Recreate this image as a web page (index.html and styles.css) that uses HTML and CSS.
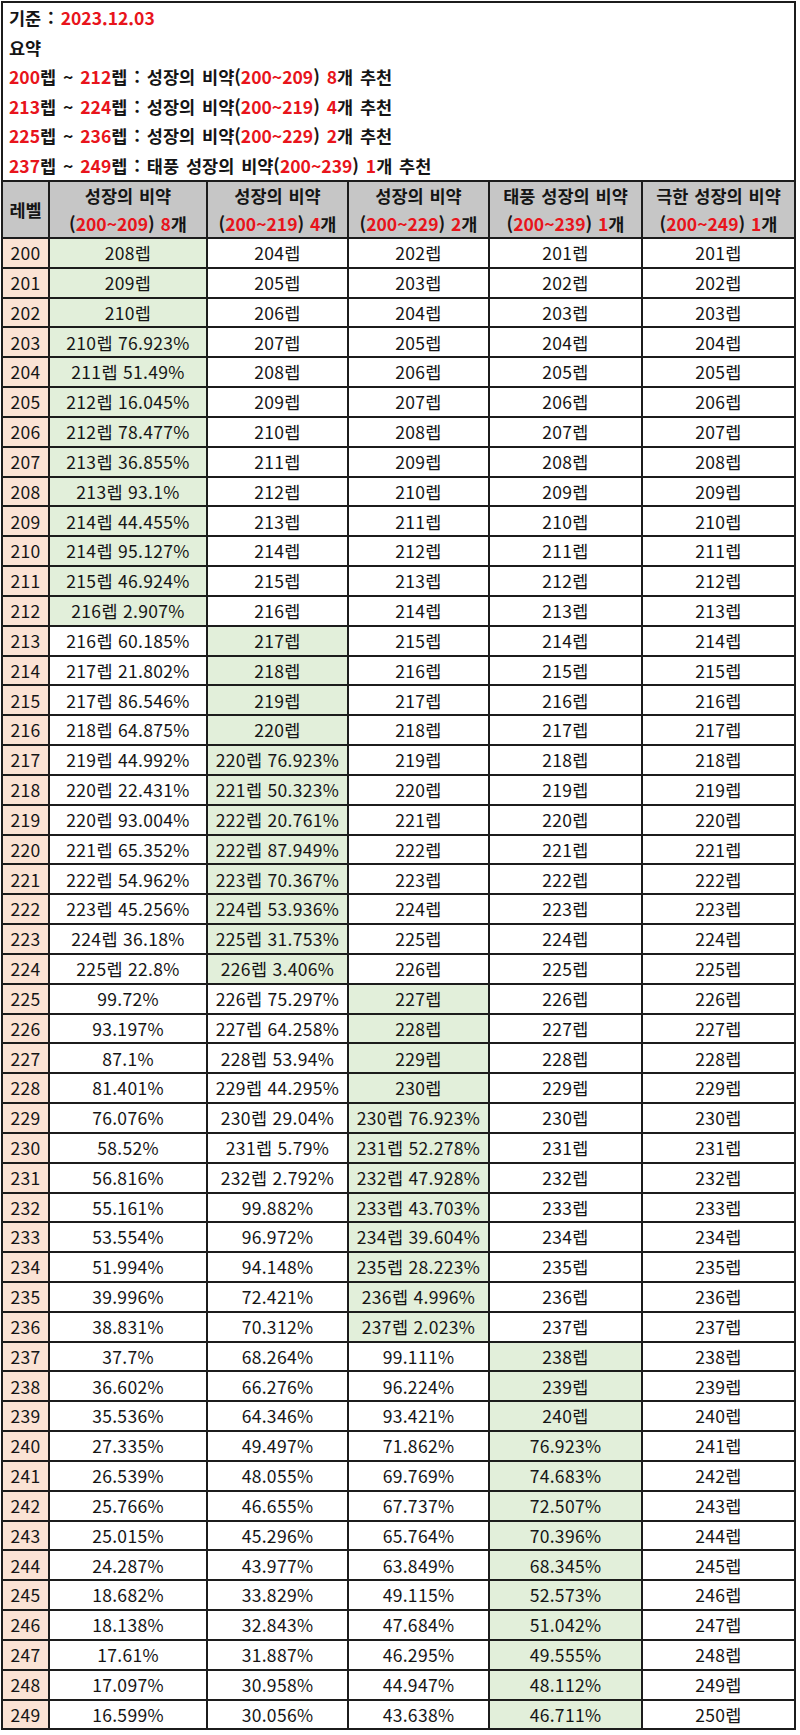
FILE: index.html
```html
<!DOCTYPE html>
<html lang="ko">
<head>
<meta charset="utf-8">
<title>성장의 비약 정리</title>
<link rel="stylesheet" href="styles.css">
</head>
<body>
<div class="sheet">
  <div class="summary">
    <div class="line">기준 : <span class="red">2023.12.03</span></div>
    <div class="line">요약</div>
    <div class="line"><span class="red">200</span>렙 ~ <span class="red">212</span>렙 : 성장의 비약(<span class="red">200~209</span>) <span class="red">8</span>개 추천</div>
    <div class="line"><span class="red">213</span>렙 ~ <span class="red">224</span>렙 : 성장의 비약(<span class="red">200~219</span>) <span class="red">4</span>개 추천</div>
    <div class="line"><span class="red">225</span>렙 ~ <span class="red">236</span>렙 : 성장의 비약(<span class="red">200~229</span>) <span class="red">2</span>개 추천</div>
    <div class="line"><span class="red">237</span>렙 ~ <span class="red">249</span>렙 : 태풍 성장의 비약(<span class="red">200~239</span>) <span class="red">1</span>개 추천</div>
  </div>
  <div class="grid">
    <div class="c h">레벨</div>
    <div class="c h"><span>성장의 비약</span><span>(<b class="red">200~209</b>) <b class="red">8</b>개</span></div>
    <div class="c h"><span>성장의 비약</span><span>(<b class="red">200~219</b>) <b class="red">4</b>개</span></div>
    <div class="c h"><span>성장의 비약</span><span>(<b class="red">200~229</b>) <b class="red">2</b>개</span></div>
    <div class="c h"><span>태풍 성장의 비약</span><span>(<b class="red">200~239</b>) <b class="red">1</b>개</span></div>
    <div class="c h"><span>극한 성장의 비약</span><span>(<b class="red">200~249</b>) <b class="red">1</b>개</span></div>

    <div class="c lv">200</div><div class="c g">208렙</div><div class="c">204렙</div><div class="c">202렙</div><div class="c">201렙</div><div class="c">201렙</div>
    <div class="c lv">201</div><div class="c g">209렙</div><div class="c">205렙</div><div class="c">203렙</div><div class="c">202렙</div><div class="c">202렙</div>
    <div class="c lv">202</div><div class="c g">210렙</div><div class="c">206렙</div><div class="c">204렙</div><div class="c">203렙</div><div class="c">203렙</div>
    <div class="c lv">203</div><div class="c g">210렙 76.923%</div><div class="c">207렙</div><div class="c">205렙</div><div class="c">204렙</div><div class="c">204렙</div>
    <div class="c lv">204</div><div class="c g">211렙 51.49%</div><div class="c">208렙</div><div class="c">206렙</div><div class="c">205렙</div><div class="c">205렙</div>
    <div class="c lv">205</div><div class="c g">212렙 16.045%</div><div class="c">209렙</div><div class="c">207렙</div><div class="c">206렙</div><div class="c">206렙</div>
    <div class="c lv">206</div><div class="c g">212렙 78.477%</div><div class="c">210렙</div><div class="c">208렙</div><div class="c">207렙</div><div class="c">207렙</div>
    <div class="c lv">207</div><div class="c g">213렙 36.855%</div><div class="c">211렙</div><div class="c">209렙</div><div class="c">208렙</div><div class="c">208렙</div>
    <div class="c lv">208</div><div class="c g">213렙 93.1%</div><div class="c">212렙</div><div class="c">210렙</div><div class="c">209렙</div><div class="c">209렙</div>
    <div class="c lv">209</div><div class="c g">214렙 44.455%</div><div class="c">213렙</div><div class="c">211렙</div><div class="c">210렙</div><div class="c">210렙</div>
    <div class="c lv">210</div><div class="c g">214렙 95.127%</div><div class="c">214렙</div><div class="c">212렙</div><div class="c">211렙</div><div class="c">211렙</div>
    <div class="c lv">211</div><div class="c g">215렙 46.924%</div><div class="c">215렙</div><div class="c">213렙</div><div class="c">212렙</div><div class="c">212렙</div>
    <div class="c lv">212</div><div class="c g">216렙 2.907%</div><div class="c">216렙</div><div class="c">214렙</div><div class="c">213렙</div><div class="c">213렙</div>
    <div class="c lv">213</div><div class="c">216렙 60.185%</div><div class="c g">217렙</div><div class="c">215렙</div><div class="c">214렙</div><div class="c">214렙</div>
    <div class="c lv">214</div><div class="c">217렙 21.802%</div><div class="c g">218렙</div><div class="c">216렙</div><div class="c">215렙</div><div class="c">215렙</div>
    <div class="c lv">215</div><div class="c">217렙 86.546%</div><div class="c g">219렙</div><div class="c">217렙</div><div class="c">216렙</div><div class="c">216렙</div>
    <div class="c lv">216</div><div class="c">218렙 64.875%</div><div class="c g">220렙</div><div class="c">218렙</div><div class="c">217렙</div><div class="c">217렙</div>
    <div class="c lv">217</div><div class="c">219렙 44.992%</div><div class="c g">220렙 76.923%</div><div class="c">219렙</div><div class="c">218렙</div><div class="c">218렙</div>
    <div class="c lv">218</div><div class="c">220렙 22.431%</div><div class="c g">221렙 50.323%</div><div class="c">220렙</div><div class="c">219렙</div><div class="c">219렙</div>
    <div class="c lv">219</div><div class="c">220렙 93.004%</div><div class="c g">222렙 20.761%</div><div class="c">221렙</div><div class="c">220렙</div><div class="c">220렙</div>
    <div class="c lv">220</div><div class="c">221렙 65.352%</div><div class="c g">222렙 87.949%</div><div class="c">222렙</div><div class="c">221렙</div><div class="c">221렙</div>
    <div class="c lv">221</div><div class="c">222렙 54.962%</div><div class="c g">223렙 70.367%</div><div class="c">223렙</div><div class="c">222렙</div><div class="c">222렙</div>
    <div class="c lv">222</div><div class="c">223렙 45.256%</div><div class="c g">224렙 53.936%</div><div class="c">224렙</div><div class="c">223렙</div><div class="c">223렙</div>
    <div class="c lv">223</div><div class="c">224렙 36.18%</div><div class="c g">225렙 31.753%</div><div class="c">225렙</div><div class="c">224렙</div><div class="c">224렙</div>
    <div class="c lv">224</div><div class="c">225렙 22.8%</div><div class="c g">226렙 3.406%</div><div class="c">226렙</div><div class="c">225렙</div><div class="c">225렙</div>
    <div class="c lv">225</div><div class="c">99.72%</div><div class="c">226렙 75.297%</div><div class="c g">227렙</div><div class="c">226렙</div><div class="c">226렙</div>
    <div class="c lv">226</div><div class="c">93.197%</div><div class="c">227렙 64.258%</div><div class="c g">228렙</div><div class="c">227렙</div><div class="c">227렙</div>
    <div class="c lv">227</div><div class="c">87.1%</div><div class="c">228렙 53.94%</div><div class="c g">229렙</div><div class="c">228렙</div><div class="c">228렙</div>
    <div class="c lv">228</div><div class="c">81.401%</div><div class="c">229렙 44.295%</div><div class="c g">230렙</div><div class="c">229렙</div><div class="c">229렙</div>
    <div class="c lv">229</div><div class="c">76.076%</div><div class="c">230렙 29.04%</div><div class="c g">230렙 76.923%</div><div class="c">230렙</div><div class="c">230렙</div>
    <div class="c lv">230</div><div class="c">58.52%</div><div class="c">231렙 5.79%</div><div class="c g">231렙 52.278%</div><div class="c">231렙</div><div class="c">231렙</div>
    <div class="c lv">231</div><div class="c">56.816%</div><div class="c">232렙 2.792%</div><div class="c g">232렙 47.928%</div><div class="c">232렙</div><div class="c">232렙</div>
    <div class="c lv">232</div><div class="c">55.161%</div><div class="c">99.882%</div><div class="c g">233렙 43.703%</div><div class="c">233렙</div><div class="c">233렙</div>
    <div class="c lv">233</div><div class="c">53.554%</div><div class="c">96.972%</div><div class="c g">234렙 39.604%</div><div class="c">234렙</div><div class="c">234렙</div>
    <div class="c lv">234</div><div class="c">51.994%</div><div class="c">94.148%</div><div class="c g">235렙 28.223%</div><div class="c">235렙</div><div class="c">235렙</div>
    <div class="c lv">235</div><div class="c">39.996%</div><div class="c">72.421%</div><div class="c g">236렙 4.996%</div><div class="c">236렙</div><div class="c">236렙</div>
    <div class="c lv">236</div><div class="c">38.831%</div><div class="c">70.312%</div><div class="c g">237렙 2.023%</div><div class="c">237렙</div><div class="c">237렙</div>
    <div class="c lv">237</div><div class="c">37.7%</div><div class="c">68.264%</div><div class="c">99.111%</div><div class="c g">238렙</div><div class="c">238렙</div>
    <div class="c lv">238</div><div class="c">36.602%</div><div class="c">66.276%</div><div class="c">96.224%</div><div class="c g">239렙</div><div class="c">239렙</div>
    <div class="c lv">239</div><div class="c">35.536%</div><div class="c">64.346%</div><div class="c">93.421%</div><div class="c g">240렙</div><div class="c">240렙</div>
    <div class="c lv">240</div><div class="c">27.335%</div><div class="c">49.497%</div><div class="c">71.862%</div><div class="c g">76.923%</div><div class="c">241렙</div>
    <div class="c lv">241</div><div class="c">26.539%</div><div class="c">48.055%</div><div class="c">69.769%</div><div class="c g">74.683%</div><div class="c">242렙</div>
    <div class="c lv">242</div><div class="c">25.766%</div><div class="c">46.655%</div><div class="c">67.737%</div><div class="c g">72.507%</div><div class="c">243렙</div>
    <div class="c lv">243</div><div class="c">25.015%</div><div class="c">45.296%</div><div class="c">65.764%</div><div class="c g">70.396%</div><div class="c">244렙</div>
    <div class="c lv">244</div><div class="c">24.287%</div><div class="c">43.977%</div><div class="c">63.849%</div><div class="c g">68.345%</div><div class="c">245렙</div>
    <div class="c lv">245</div><div class="c">18.682%</div><div class="c">33.829%</div><div class="c">49.115%</div><div class="c g">52.573%</div><div class="c">246렙</div>
    <div class="c lv">246</div><div class="c">18.138%</div><div class="c">32.843%</div><div class="c">47.684%</div><div class="c g">51.042%</div><div class="c">247렙</div>
    <div class="c lv">247</div><div class="c">17.61%</div><div class="c">31.887%</div><div class="c">46.295%</div><div class="c g">49.555%</div><div class="c">248렙</div>
    <div class="c lv">248</div><div class="c">17.097%</div><div class="c">30.958%</div><div class="c">44.947%</div><div class="c g">48.112%</div><div class="c">249렙</div>
    <div class="c lv">249</div><div class="c">16.599%</div><div class="c">30.056%</div><div class="c">43.638%</div><div class="c g">46.711%</div><div class="c">250렙</div>
  </div>
</div>
</body>
</html>
```

FILE: styles.css
```css
html, body {
  margin: 0;
  padding: 0;
  background: #ffffff;
}

body {
  font-family: "Noto Sans CJK KR", "Noto Sans", sans-serif;
  font-size: 17.5px;
  color: #151515;
}

.sheet {
  margin: 1px 0 0 1px;
  width: 795px;
  box-sizing: border-box;
  border-left: 2px solid #1c1c1c;
  border-top: 2px solid #1c1c1c;
}

.summary {
  height: 179px;
  box-sizing: border-box;
  border-right: 2px solid #1c1c1c;
  border-bottom: 2px solid #1c1c1c;
  padding-left: 6px;
  font-weight: bold;
  letter-spacing: 0;
  word-spacing: 2px;
}

.summary .line {
  height: 29.5px;
  line-height: 29.5px;
  white-space: nowrap;
}

.red {
  color: #e8141b;
}

.grid {
  display: grid;
  grid-template-columns: 47px 158px 141px 141px 153px 153px;
  grid-template-rows: 57px;
  grid-auto-rows: 29.84px;
}

.c {
  box-sizing: border-box;
  border-right: 2px solid #1c1c1c;
  border-bottom: 2px solid #1c1c1c;
  display: flex;
  align-items: center;
  justify-content: center;
  white-space: nowrap;
  line-height: 1;
  letter-spacing: 0.3px;
  background: #ffffff;
}

.h {
  background: #c6c6c6;
  font-weight: bold;
  flex-direction: column;
  justify-content: space-around;
  letter-spacing: 0;
  word-spacing: 1px;
}

.h span {
  display: block;
}

.h b {
  font-weight: bold;
}

.lv {
  background: #fbe3d5;
}

.g {
  background: #e2efda;
}
```
